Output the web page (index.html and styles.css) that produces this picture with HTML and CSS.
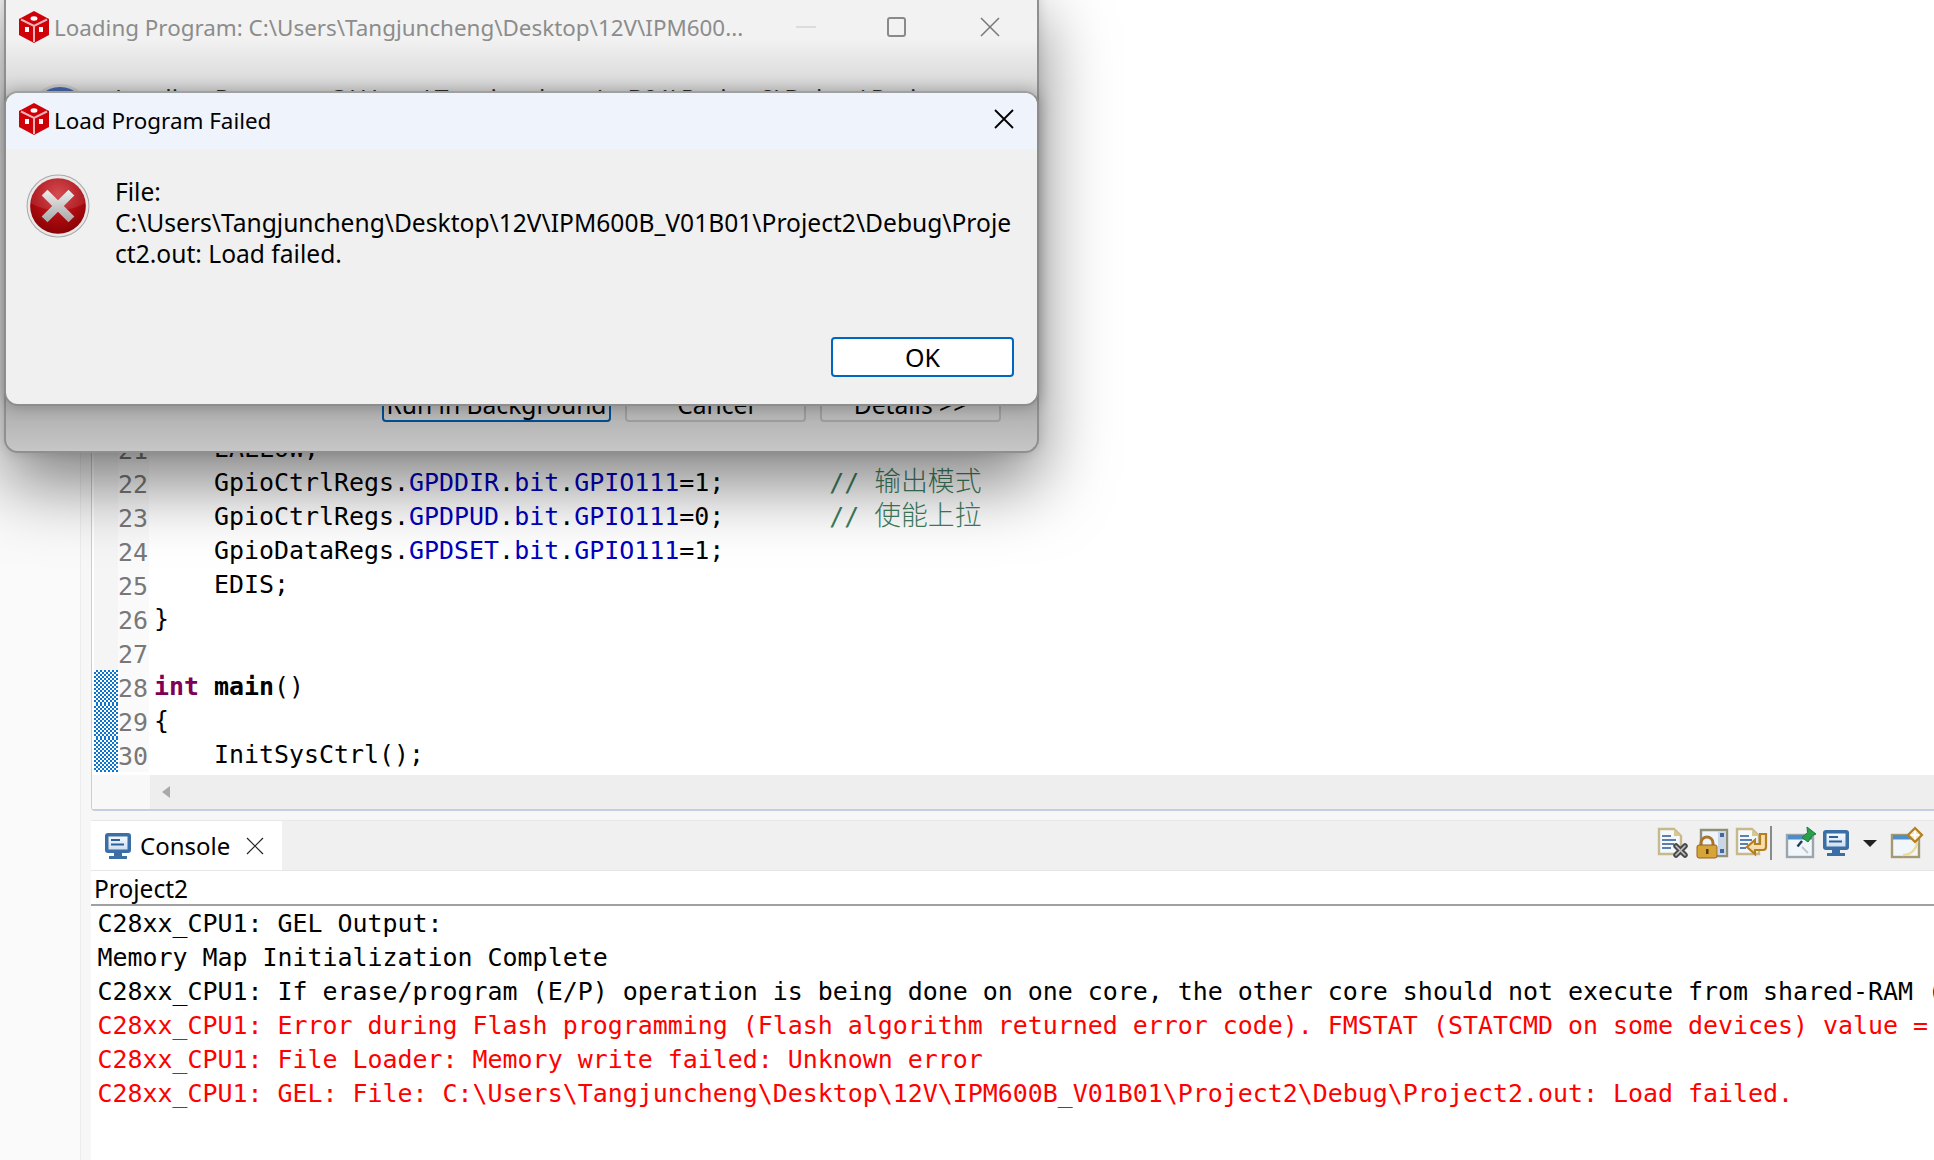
FILE: index.html
```html
<!DOCTYPE html>
<html lang="en">
<head>
<meta charset="utf-8">
<title>Load Program Failed</title>
<link rel="stylesheet" href="styles.css">
</head>
<body>
<svg class="defs" width="0" height="0" aria-hidden="true">
  <defs>
    <symbol id="dice" viewBox="0 0 32 32">
      <path fill="#cf0008" d="M16 0 31 8v16l-15 8-15-8V8z"/>
      <path fill="none" stroke="#eeb4b8" stroke-width="2" d="M3 8.500 16 15l13-6.500M16 15v16"/>
      <ellipse cx="16" cy="7.500" rx="3.400" ry="2.200" fill="#fff"/>
      <rect x="7" y="16" width="4" height="5" fill="#fff"/>
      <rect x="21" y="16" width="4" height="5" fill="#fff"/>
    </symbol>
    <radialGradient id="redface" cx="50%" cy="30%" r="75%">
      <stop offset="0" stop-color="#d0383d"/>
      <stop offset="0.55" stop-color="#ac0a0f"/>
      <stop offset="1" stop-color="#820003"/>
    </radialGradient>
    <linearGradient id="glass" gradientUnits="userSpaceOnUse" x1="0" y1="16" x2="0" y2="46">
      <stop offset="0" stop-color="#ececec"/>
      <stop offset="1" stop-color="#a8a8a8"/>
    </linearGradient>
    <linearGradient id="screen" x1="0" y1="0" x2="0" y2="1">
      <stop offset="0" stop-color="#f4f8fd"/>
      <stop offset="1" stop-color="#cfe0f3"/>
    </linearGradient>
    <symbol id="monitor" viewBox="0 0 28 28">
      <rect x="1" y="1" width="26" height="20" rx="3" fill="#3a6ea5"/>
      <rect x="4.500" y="4.500" width="19" height="13" fill="url(#screen)"/>
      <path stroke="#2f5f96" stroke-width="2" d="M7 8h9M7 12.500h13"/>
      <path fill="#3a6ea5" d="M10 21h8v3h5v3H5v-3h5z"/>
    </symbol>
  </defs>
</svg>

<div class="workbench">
  <div class="rail"></div>
  <div class="main">
    <section class="editor">
      <div class="code">
        <div class="row"><span class="ln">21</span><span class="src">    EALLOW;</span></div>
        <div class="row"><span class="ln">22</span><span class="src">    GpioCtrlRegs.<b class="fld">GPDDIR</b>.<b class="fld">bit</b>.<b class="fld">GPIO111</b>=1;       <span class="cmt">// <span class="cjk">输出模式</span></span></span></div>
        <div class="row"><span class="ln">23</span><span class="src">    GpioCtrlRegs.<b class="fld">GPDPUD</b>.<b class="fld">bit</b>.<b class="fld">GPIO111</b>=0;       <span class="cmt">// <span class="cjk">使能上拉</span></span></span></div>
        <div class="row"><span class="ln">24</span><span class="src">    GpioDataRegs.<b class="fld">GPDSET</b>.<b class="fld">bit</b>.<b class="fld">GPIO111</b>=1;</span></div>
        <div class="row"><span class="ln">25</span><span class="src">    EDIS;</span></div>
        <div class="row"><span class="ln">26</span><span class="src">}</span></div>
        <div class="row"><span class="ln">27</span><span class="src"></span></div>
        <div class="row mark"><span class="ln">28</span><span class="src"><b class="kw">int</b> <b class="fn">main</b>()</span></div>
        <div class="row mark"><span class="ln">29</span><span class="src">{</span></div>
        <div class="row mark"><span class="ln">30</span><span class="src">    InitSysCtrl();</span></div>
      </div>
      <div class="hscroll">
        <div class="hscroll-gutter"></div>
        <div class="hscroll-track"><span class="arrow-left"></span></div>
      </div>
    </section>

    <section class="console">
      <header class="tabbar">
        <div class="tab">
          <svg class="tab-icon"><use href="#monitor"/></svg>
          <span class="tab-label">Console</span>
          <svg class="tab-close" viewBox="0 0 18 18"><path d="M1 1 17 17M17 1 1 17"/></svg>
        </div>
        <div class="tools">
          <svg class="tool" viewBox="0 0 32 32">
            <path fill="#f4f7fb" stroke="#c6b98c" stroke-width="2.400" d="M2 2h15l7 7v18H2z"/>
            <path fill="#d9c88e" d="M17 2l7 7h-7z"/>
            <path stroke="#5d7fb0" stroke-width="2.200" d="M5 9h9M5 13h14M5 17h12M5 21h9"/>
            <path stroke="#4a4a4a" stroke-width="5.500" stroke-linecap="round" d="M19 19l9 9M28 19l-9 9"/>
            <path stroke="#c4c4c4" stroke-width="1.600" stroke-linecap="round" d="M19 19l9 9M28 19l-9 9"/>
          </svg>
          <svg class="tool" viewBox="0 0 32 32">
            <path fill="#eef4fb" stroke="#8f8f7a" stroke-width="2.400" d="M5 3h26v26H5z"/>
            <rect x="22" y="4" width="8" height="24" fill="#c9d6e6"/>
            <rect x="24" y="6" width="4" height="4" fill="#44669a"/>
            <rect x="24" y="22" width="4" height="4" fill="#44669a"/>
            <path fill="none" stroke="#a8752a" stroke-width="3" d="M5 19v-3a6 6 0 0 1 12 0v3"/>
            <rect x="1" y="18" width="20" height="13" rx="2" fill="#d6a53a" stroke="#9c5f20"/>
            <rect x="10" y="22" width="2.500" height="5" fill="#5c3a10"/>
          </svg>
          <svg class="tool" viewBox="0 0 32 32">
            <path fill="#f4f7fb" stroke="#c6b98c" stroke-width="2.400" d="M2 2h15l7 7v18H2z"/>
            <path fill="#d9c88e" d="M17 2l7 7h-7z"/>
            <path stroke="#5d7fb0" stroke-width="2.200" d="M5 9h9M5 13h12M5 17h8M5 21h6"/>
            <path fill="#f5deb0" stroke="#b57f1f" stroke-width="2.200" d="M25 7h6v13a3 3 0 0 1-3 3h-8v4l-8-7 8-7v4h5z"/>
          </svg>
          <span class="tool-sep"></span>
          <svg class="tool" viewBox="0 0 32 32">
            <rect x="1" y="8" width="26" height="22" fill="#f1f6fb" stroke="#9aa5ad" stroke-width="2.400"/>
            <rect x="2" y="8" width="24" height="4.500" fill="#4d8fcb"/>
            <path stroke="#bfc6cc" stroke-width="2" d="M16 20l6 6"/>
            <path fill="#29a04a" stroke="#1a7d34" d="M21 0l9 7-3.500 1.500-4.500 6.500-6-4.500 5.500-5z"/>
            <path stroke="#223a5a" stroke-width="2.400" d="M16 14l-4.500 5.500"/>
          </svg>
          <svg class="tool tool-mon"><use href="#monitor"/></svg>
          <span class="caret"></span>
          <svg class="tool" viewBox="0 0 32 32">
            <rect x="1" y="8" width="27" height="22" fill="#f1f6fb" stroke="#a39a73" stroke-width="2.400"/>
            <rect x="2" y="8" width="25" height="4.500" fill="#4d8fcb"/>
            <path fill="none" stroke="#ecd9a0" stroke-width="2.400" d="M26 12a14 14 0 0 1-14 16"/>
            <path fill="#f6e7bf" stroke="#b57f1f" stroke-width="2.200" d="M24 1l7 7-7 7-7-7z"/>
            <path stroke="#fff" stroke-width="2" d="M24 4v8M20 8h8"/>
          </svg>
        </div>
      </header>
      <div class="console-name">Project2</div>
      <div class="output">
        <div class="out">C28xx_CPU1: GEL Output:</div>
        <div class="out">Memory Map Initialization Complete</div>
        <div class="out">C28xx_CPU1: If erase/program (E/P) operation is being done on one core, the other core should not execute from shared-RAM (</div>
        <div class="out err">C28xx_CPU1: Error during Flash programming (Flash algorithm returned error code). FMSTAT (STATCMD on some devices) value = </div>
        <div class="out err">C28xx_CPU1: File Loader: Memory write failed: Unknown error</div>
        <div class="out err">C28xx_CPU1: GEL: File: C:\Users\Tangjuncheng\Desktop\12V\IPM600B_V01B01\Project2\Debug\Project2.out: Load failed.</div>
      </div>
    </section>
  </div>
</div>

<div class="window progress">
  <div class="titlebar progress-title">
    <svg class="app-icon"><use href="#dice"/></svg>
    <span class="title-text">Loading Program: C:\Users\Tangjuncheng\Desktop\12V\IPM600...</span>
    <span class="ctl ctl-min"></span>
    <span class="ctl ctl-max"></span>
    <svg class="ctl-close" viewBox="0 0 20 20"><path d="M1 1 19 19M19 1 1 19"/></svg>
  </div>
  <div class="progress-body">
    <span class="info-dot"></span>
    <span class="progress-msg">Loading Program: C:\Users\Tangjuncheng\...B01\Project2\Debug\Proje</span>
  </div>
  <div class="progress-actions">
    <span class="btn btn-default">Run in Background</span>
    <span class="btn">Cancel</span>
    <span class="btn">Details &gt;&gt;</span>
  </div>
</div>

<div class="window failed">
  <div class="titlebar failed-title">
    <svg class="app-icon"><use href="#dice"/></svg>
    <span class="title-text">Load Program Failed</span>
    <svg class="failed-close" viewBox="0 0 20 20"><path d="M1 1 19 19M19 1 1 19"/></svg>
  </div>
  <div class="failed-body">
    <svg class="err-icon" viewBox="0 0 62 62">
      <circle cx="31" cy="31" r="30" fill="#e8e8e8" stroke="#a9a9a9"/>
      <circle cx="31" cy="31" r="27" fill="url(#redface)"/>
      <path fill="#fff" opacity=".1" d="M5 28a26 26 0 0 1 52 0c-12 8-38 10-52 0z"/>
      <path stroke="url(#glass)" stroke-width="8" d="M18 18 44 44M44 18 18 44" fill="none"/>
    </svg>
    <p class="failed-msg">File:<br>C:\Users\Tangjuncheng\Desktop\12V\IPM600B_V01B01\Project2\Debug\Proje<br>ct2.out: Load failed.</p>
  </div>
  <div class="failed-actions"><span class="btn btn-ok">OK</span></div>
</div>
</body>
</html>
```
FILE: styles.css
```css
* { box-sizing: border-box; }
html, body { margin: 0; height: 100%; }
body {
  position: relative;
  overflow: hidden;
  background: #fff;
  color: #000;
  font-family: "Noto Sans", "Open Sans", sans-serif;
}
.defs { position: absolute; }

.workbench { display: flex; height: 1160px; }
.rail { width: 81px; flex: none; background: #fafafa; border-right: 1px solid #ececec; }
.main {
  flex: 1;
  min-width: 0;
  display: flex;
  flex-direction: column;
  padding-left: 10px;
  background: #f7f7f7;
}

.editor {
  height: 811px;
  flex: none;
  display: flex;
  flex-direction: column;
  justify-content: flex-end;
  background: #fff;
  border-left: 1px solid #c6cde2;
  border-bottom: 2px solid #c6cde2;
  border-bottom-left-radius: 4px;
}
.code { font: 24.93px/34px "DejaVu Sans Mono", monospace; }
.row { display: flex; height: 34px; white-space: pre; }
.ln {
  flex: none;
  width: 55px;
  padding-right: 1px;
  padding-top: 2px;
  padding-left: 24px;
  margin-left: 2px;
  color: #787878;
  background: linear-gradient(to right, #f5f5f5 24px, #fafafa 24px);
}
.mark .ln {
  background:
    linear-gradient(to right, transparent 24px, #fafafa 24px),
    conic-gradient(#0a74d0 25%, #fff 0 50%, #0a74d0 0 75%, #fff 0) 0 0 / 4px 4px;
}
.src { padding-left: 5px; }
.fld { font-weight: 400; color: #0000c0; }
.kw { color: #7f0055; font-weight: 700; }
.fn { font-weight: 700; }
.cmt { color: #3f7f5f; }
.cjk { font-family: "Noto Sans CJK SC", sans-serif; font-size: 26.800px; font-weight: 300; line-height: 1; }

.hscroll { display: flex; height: 34px; margin-top: 3px; }
.hscroll-gutter { width: 58px; background: #f8f8f8; }
.hscroll-track { flex: 1; display: flex; align-items: center; padding-left: 12px; background: #eee; }
.arrow-left {
  width: 0; height: 0;
  border-style: solid;
  border-width: 6px 8px 6px 0;
  border-color: transparent #a9a9a9 transparent transparent;
}

.console { flex: 1; padding-top: 9px; display: flex; flex-direction: column; min-height: 0; }
.tabbar {
  flex: none;
  height: 51px;
  display: flex;
  justify-content: space-between;
  background: #f0f0f0;
  border-bottom: 1px solid #e6e6e6;
  border-top: 1px solid #e8e8e8;
}
.tab {
  width: 191px;
  display: flex;
  align-items: center;
  padding-left: 13px;
  background: #fff;
}
.tab-icon { width: 28px; height: 28px; flex: none; }
.tab-label { margin-left: 8px; font-size: 24px; }
.tab-close { width: 18px; height: 18px; margin-left: 16px; flex: none; }
.tab-close path { stroke: #222; stroke-width: 1.2; fill: none; }
.tools { display: flex; align-items: center; padding-right: 11px; padding-bottom: 5px; }
.tool { width: 32px; height: 32px; margin-left: 7px; flex: none; overflow: visible; }
.tool-sep { width: 2px; height: 34px; background: #8a8a8a; margin-left: 3px; margin-right: 7px; }
.tool-mon { width: 28px; height: 28px; margin-left: 4px; }
.caret {
  width: 0; height: 0;
  margin-left: 13px; margin-right: 7px;
  border-style: solid;
  border-width: 7px 7px 0;
  border-color: #222 transparent transparent;
}
.console-name {
  flex: none;
  height: 35px;
  padding-left: 3px;
  background: #fff;
  border-bottom: 2px solid #a0a0a0;
  font-size: 24.500px;
  line-height: 36px;
}
.output {
  flex: 1;
  background: #fff;
  padding-left: 6.500px;
  overflow: hidden;
  font: 24.93px/34px "DejaVu Sans Mono", monospace;
  padding-top: 1px;
}
.out { white-space: pre; height: 34px; }
.err { color: #f00; }

/* free-floating windows */
.window {
  position: absolute;
  left: 4px;
  width: 1035px;
  border-radius: 14px;
}
.progress {
  top: -14px;
  height: 467px;
  background: #f2f2f2;
  border: 2px solid #8f8f8f;
  border-top-color: #bdbdbd;
  box-shadow: 0 30px 70px 0 rgba(0, 0, 0, .5), 0 0 12px rgba(0, 0, 0, .12);
  overflow: hidden;
}
.progress::after {
  content: "";
  position: absolute;
  left: 0; right: 0; top: 50px; bottom: 0;
  background: linear-gradient(to bottom, rgba(0,0,0,0) 0, rgba(0,0,0,.09) 40px, rgba(0,0,0,.14) 55px, rgba(0,0,0,.28) 370px, rgba(0,0,0,.18) 100%);
  pointer-events: none;
}
.titlebar { display: flex; align-items: center; }
.app-icon { width: 32px; height: 32px; flex: none; }
.title-text { margin-left: 4px; font-size: 22.400px; white-space: nowrap; }
.progress-title {
  height: 57px;
  padding: 21px 0 0 12px;
  color: #8c8c8c;
  position: relative;
}
.progress-title .title-text { width: 750px; overflow: hidden; padding-top: 1px; }
.ctl-min { width: 20px; height: 2px; background: #dcdcdc; margin-left: -8px; }
.ctl-max { width: 19px; height: 20px; border: 2px solid #8a8a8a; border-radius: 3px; margin-left: 71px; }
.ctl-close { width: 20px; height: 20px; margin-left: 74px; }
.ctl-close path { stroke: #777; stroke-width: 1.5; fill: none; }
.progress-body { position: relative; height: 61px; }
.info-dot {
  position: absolute;
  left: 24px; top: 39px;
  width: 60px; height: 60px;
  border-radius: 50%;
  background: #4f74c0;
  border: 3px solid #e0e0e0;
}
.progress-msg {
  position: absolute;
  left: 109px; top: 37px;
  white-space: nowrap;
  font-size: 24.600px;
  color: #333;
}
.progress-actions {
  position: absolute;
  left: 376px;
  top: 396px;
  display: flex;
  gap: 14px;
}
.btn {
  display: flex;
  align-items: center;
  justify-content: center;
  width: 181px;
  height: 38px;
  padding-top: 2px;
  border: 2px solid #d0d0d0;
  border-radius: 4px;
  background: #f6f6f6;
  font-size: 24.600px;
}
.btn-default { width: 229px; border-color: #0067c0; }

.failed {
  top: 91px;
  height: 315px;
  background: #f0f0f0;
  border: 2px solid #8d8d8d;
  border-top-color: #a0a0a0;
  box-shadow: 0 0 16px rgba(0, 0, 0, .25);
  overflow: hidden;
  display: flex;
  flex-direction: column;
}
.failed-title {
  flex: none;
  height: 56px;
  padding-left: 12px;
  padding-bottom: 2px;
  background: #eff3fb;
}
.failed-title .app-icon { margin-top: -2px; }
.failed-close { width: 20px; height: 20px; margin-left: auto; margin-right: 23px; margin-top: -2px; }
.failed-close path { stroke: #000; stroke-width: 1.8; fill: none; }
.failed-body { flex: 1; display: flex; padding: 24px 0 0 20px; }
.err-icon { width: 64px; height: 66px; flex: none; }
.failed-msg { margin: 3px 0 0 25px; font-size: 24.600px; line-height: 31px; white-space: nowrap; }
.failed-actions { flex: none; display: flex; justify-content: flex-end; padding: 0 23px 27px 0; }
.btn-ok {
  width: 183px;
  height: 40px;
  padding-top: 0;
  background: #fff;
  border-color: #0067c0;
  font-size: 25px;
}
```
